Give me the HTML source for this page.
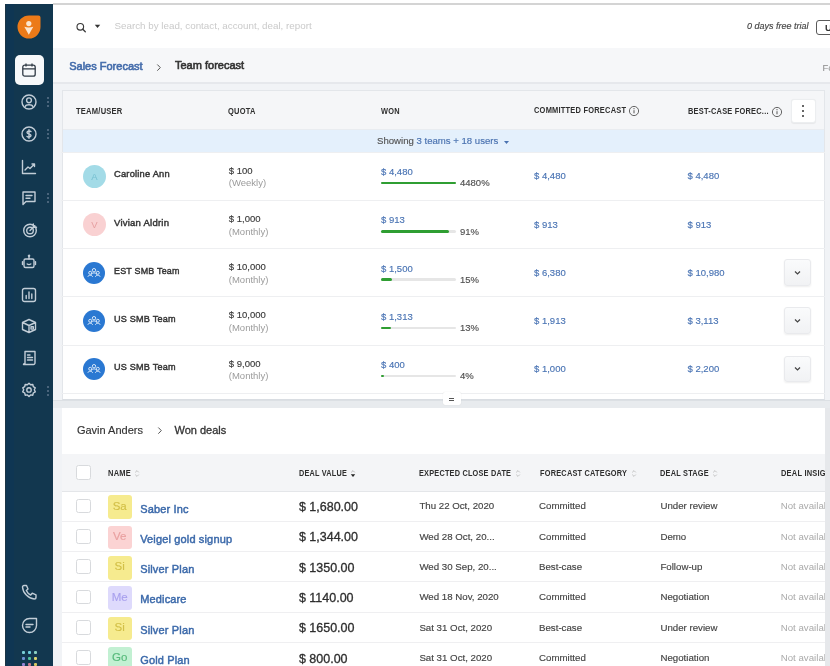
<!DOCTYPE html><html><head><meta charset="utf-8"><style>
*{margin:0;padding:0;box-sizing:border-box}
html,body{width:830px;height:666px;overflow:hidden;background:#fff;font-family:"Liberation Sans",sans-serif;color:#333}
div,span,svg{position:absolute}
.t{white-space:nowrap;line-height:1}
.m{-webkit-text-stroke:0.45px currentColor}
.m3{-webkit-text-stroke:0.6px currentColor}
.m1{-webkit-text-stroke:0.15px currentColor}
.m2{-webkit-text-stroke:0.3px currentColor}
.hb{font-weight:bold}
</style></head><body><div id="wrap" style="left:0;top:0;width:830px;height:666px;overflow:hidden;filter:blur(0.35px)">
<div style="left:0.00px;top:0.00px;width:830.00px;height:666.00px;background:#fff;"></div>
<div style="left:53.00px;top:3.00px;width:777.00px;height:1.50px;background:#d4d4d4;"></div>
<div style="left:5.00px;top:4.00px;width:48.00px;height:662.00px;background:#12374f;"></div>
<div style="left:6.00px;top:4.00px;width:7.50px;height:662.00px;background:#0f3653;"></div>
<div style="left:4.50px;top:4.00px;width:1.80px;height:662.00px;background:#1b3545;"></div>
<div style="left:53.00px;top:4.50px;width:777.00px;height:43.50px;background:#fff;"></div>
<div style="left:53.00px;top:48.00px;width:777.00px;height:34.00px;background:#f6f7f9;"></div>
<div style="left:53.00px;top:82.00px;width:777.00px;height:2.00px;background:#e6e8ec;"></div>
<div style="left:53.00px;top:84.00px;width:777.00px;height:582.00px;background:#f1f3f6;"></div>
<div style="left:61.50px;top:90.00px;width:763.00px;height:309.50px;background:#fff;border:1px solid #e3e6ea;border-bottom:1px solid #d9dde2"></div>
<div style="left:62.50px;top:91.00px;width:761.00px;height:38.00px;background:#f5f6f8;"></div>
<div style="left:62.50px;top:129.00px;width:761.00px;height:1.00px;background:#e9ecf0;"></div>
<div style="left:62.50px;top:130.00px;width:761.00px;height:22.00px;background:#e4f0fc;"></div>
<div style="left:53.00px;top:399.50px;width:777.00px;height:8.50px;background:#e8ebee;border-top:1px solid #dce0e4"></div>
<div style="left:62.00px;top:408.00px;width:763.00px;height:258.00px;background:#fff;"></div>
<div style="left:825.00px;top:408.00px;width:5.00px;height:258.00px;background:#e6e8eb;"></div>
<svg style="left:75px;top:21px" width="13" height="13" viewBox="0 0 13 13"><circle cx="5.3" cy="5.8" r="3.3" stroke="#3a3a3a" stroke-width="1.15" fill="none"/><path d="M7.8 8.3 L10.3 10.8" stroke="#3a3a3a" stroke-width="1.3" stroke-linecap="round"/></svg>
<svg style="left:94px;top:24px" width="7" height="5" viewBox="0 0 7 5"><path d="M0.8 0.8 L6.2 0.8 L3.5 4 Z" fill="#333"/></svg>
<div class="t" style="left:114.50px;top:21.35px;font-size:9.80px;color:#cacaca;">Search by lead, contact, account, deal, report</div>
<div class="t m1" style="left:747.00px;top:22.24px;font-size:9.00px;color:#444;font-style:italic">0 days free trial</div>
<div style="left:816.00px;top:20.00px;width:20.00px;height:15.00px;background:#fff;border:1.4px solid #5a5a5a;border-radius:3px"></div>
<div class="t hb" style="left:825.00px;top:22.88px;font-size:9.50px;color:#333;">U</div>
<div class="t m3" style="left:69.20px;top:60.51px;font-size:11.00px;color:#446cab;">Sales Forecast</div>
<svg style="left:155px;top:63px" width="8" height="9" viewBox="0 0 8 9"><path d="M2.3 1.5 L5.3 4.6 L2.3 7.7" stroke="#555" stroke-width="1" fill="none"/></svg>
<div class="t m3" style="left:175.00px;top:59.71px;font-size:11.00px;color:#333;">Team forecast</div>
<div class="t" style="left:822.50px;top:62.88px;font-size:9.50px;color:#8a8a8a;">Fo</div>
<svg style="left:15.5px;top:14px" width="26" height="26" viewBox="0 0 26 26"><path d="M13 1.5 H22.5 Q24.5 1.5 24.5 3.5 V13 A11.5 11.5 0 1 1 13 1.5 Z" fill="#ec7a18"/><circle cx="12.8" cy="9.6" r="2.6" fill="#fbe6d0"/><path d="M8.3 12.8 Q12.8 14.2 17.3 12.8 L12.8 20.8 Z" fill="#fbe6d0"/></svg>
<div style="left:14.80px;top:55.00px;width:29.40px;height:29.80px;background:#f6f8fa;border-radius:5px"></div>
<svg style="left:21px;top:62px" width="16" height="16" viewBox="0 0 16 16"><rect x="1.8" y="3.2" width="12.4" height="11" rx="2" stroke="#2f3a45" stroke-width="1.3" fill="none"/><path d="M1.8 6.8 H14.2 M5 1.5 V4.5 M11 1.5 V4.5" stroke="#2f3a45" stroke-width="1.3"/></svg>
<svg style="left:21.0px;top:93.5px" width="16" height="16" viewBox="0 0 16 16"><g stroke="#c2cdd7" fill="none" stroke-width="1.4" stroke-linecap="round" stroke-linejoin="round"><circle cx="8" cy="8" r="7"/><circle cx="8" cy="6.3" r="2.4"/><path d="M4.2 12.6 C5 10.2 11 10.2 11.8 12.6"/></g></svg>
<div style="left:47.20px;top:97.00px;width:1.60px;height:1.60px;background:#5d748a;border-radius:1px"></div>
<div style="left:47.20px;top:101.00px;width:1.60px;height:1.60px;background:#5d748a;border-radius:1px"></div>
<div style="left:47.20px;top:105.00px;width:1.60px;height:1.60px;background:#5d748a;border-radius:1px"></div>
<svg style="left:21.0px;top:126.0px" width="16" height="16" viewBox="0 0 16 16"><g stroke="#c2cdd7" fill="none" stroke-width="1.4" stroke-linecap="round" stroke-linejoin="round"><circle cx="8" cy="8" r="7"/><path d="M10 5.6 C9.4 4.8 6 4.6 6 6.6 C6 8.4 10 7.6 10 9.5 C10 11.4 6.6 11.2 6 10.4 M8 3.8 V12.2"/></g></svg>
<div style="left:47.20px;top:129.00px;width:1.60px;height:1.60px;background:#5d748a;border-radius:1px"></div>
<div style="left:47.20px;top:133.00px;width:1.60px;height:1.60px;background:#5d748a;border-radius:1px"></div>
<div style="left:47.20px;top:137.00px;width:1.60px;height:1.60px;background:#5d748a;border-radius:1px"></div>
<svg style="left:21.0px;top:158.5px" width="16" height="16" viewBox="0 0 16 16"><g stroke="#c2cdd7" fill="none" stroke-width="1.4" stroke-linecap="round" stroke-linejoin="round"><path d="M1.5 1.5 V14.5 H14.5"/><path d="M4 11 L7 8 L9 9.5 L13.5 5 M11 5 H13.5 V7.5"/></g></svg>
<svg style="left:21.0px;top:190.0px" width="16" height="16" viewBox="0 0 16 16"><g stroke="#c2cdd7" fill="none" stroke-width="1.4" stroke-linecap="round" stroke-linejoin="round"><path d="M2 2 H14 V11.5 H5 L2 14.5 Z"/><path d="M5 5.5 H11 M5 8.3 H9"/></g></svg>
<div style="left:47.20px;top:193.00px;width:1.60px;height:1.60px;background:#5d748a;border-radius:1px"></div>
<div style="left:47.20px;top:197.00px;width:1.60px;height:1.60px;background:#5d748a;border-radius:1px"></div>
<div style="left:47.20px;top:201.00px;width:1.60px;height:1.60px;background:#5d748a;border-radius:1px"></div>
<svg style="left:21.5px;top:222.0px" width="16" height="16" viewBox="0 0 16 16"><g stroke="#c2cdd7" fill="none" stroke-width="1.4" stroke-linecap="round" stroke-linejoin="round"><circle cx="8" cy="8.5" r="6.3"/><circle cx="8" cy="8.5" r="3.3"/><path d="M8 8.5 L12.8 3.7 M11.3 2 V5.2 H14.5"/></g></svg>
<svg style="left:21.0px;top:254.0px" width="16" height="16" viewBox="0 0 16 16"><g stroke="#c2cdd7" fill="none" stroke-width="1.4" stroke-linecap="round" stroke-linejoin="round"><rect x="3" y="5" width="10" height="8.5" rx="1.5"/><path d="M8 2.6 V5 M6.2 10 Q8 11.2 9.8 10 M1.5 7.8 V10.6 M14.5 7.8 V10.6"/><circle cx="8" cy="1.8" r="0.6"/></g></svg>
<svg style="left:21.0px;top:286.5px" width="16" height="16" viewBox="0 0 16 16"><g stroke="#c2cdd7" fill="none" stroke-width="1.4" stroke-linecap="round" stroke-linejoin="round"><rect x="1.5" y="1.5" width="13" height="13" rx="2"/><path d="M5.2 11.5 V8.5 M8 11.5 V5 M10.8 11.5 V7"/></g></svg>
<svg style="left:21.0px;top:318.0px" width="16" height="16" viewBox="0 0 16 16"><g stroke="#c2cdd7" fill="none" stroke-width="1.4" stroke-linecap="round" stroke-linejoin="round"><path d="M8 1.5 L14.5 4.5 V11.5 L8 14.5 L1.5 11.5 V4.5 Z M1.5 4.5 L8 7.5 L14.5 4.5 M8 7.5 V14.5"/><rect x="10" y="8.8" width="2.3" height="2.3"/></g></svg>
<svg style="left:21.0px;top:350.0px" width="16" height="16" viewBox="0 0 16 16"><g stroke="#c2cdd7" fill="none" stroke-width="1.4" stroke-linecap="round" stroke-linejoin="round"><path d="M4 13.5 V1.5 H14 V13 A1.5 1.5 0 0 1 12.5 14.5 H2.5 A1.5 1.5 0 0 1 4 13.5"/><path d="M6.5 5 H9 M6.5 7.5 H11.5 M6.5 10 H11.5"/></g></svg>
<svg style="left:21.0px;top:382.0px" width="16" height="16" viewBox="0 0 16 16"><g stroke="#c2cdd7" fill="none" stroke-width="1.4" stroke-linecap="round" stroke-linejoin="round"><path d="M8 1.2 L9.6 2.8 L11.8 2.5 L12.3 4.7 L14.3 5.8 L13.3 7.8 L14.3 9.9 L12.3 11 L11.8 13.2 L9.6 12.9 L8 14.5 L6.4 12.9 L4.2 13.2 L3.7 11 L1.7 9.9 L2.7 7.8 L1.7 5.8 L3.7 4.7 L4.2 2.5 L6.4 2.8 Z"/><circle cx="8" cy="7.9" r="2.2"/></g></svg>
<div style="left:47.20px;top:386.00px;width:1.60px;height:1.60px;background:#5d748a;border-radius:1px"></div>
<div style="left:47.20px;top:390.00px;width:1.60px;height:1.60px;background:#5d748a;border-radius:1px"></div>
<div style="left:47.20px;top:394.00px;width:1.60px;height:1.60px;background:#5d748a;border-radius:1px"></div>
<svg style="left:20.5px;top:583.5px" width="17" height="17" viewBox="0 0 17 17"><g stroke="#c2cdd7" fill="none" stroke-width="1.4" stroke-linecap="round" stroke-linejoin="round"><path d="M3 1.5 L5.5 1.5 L7 5 L5.3 6.5 C6.2 8.6 7.6 10 9.7 11 L11.2 9.2 L15 10.8 V13.2 C15 14.2 14.2 15 13.2 15 C7.5 14.6 1.8 9 1.5 3 C1.5 2.2 2.2 1.5 3 1.5 Z"/></g></svg>
<svg style="left:21.0px;top:617.0px" width="17" height="17" viewBox="0 0 17 17"><g stroke="#c2cdd7" fill="none" stroke-width="1.4" stroke-linecap="round" stroke-linejoin="round"><path d="M8.5 1.5 H15.5 V8.5 A7 7 0 1 1 8.5 1.5 Z"/><path d="M5 7.5 H12 M5 10 H9"/></g></svg>
<div style="left:21.50px;top:650.50px;width:3.50px;height:3.50px;background:#79cfd6;border-radius:1px"></div>
<div style="left:27.50px;top:650.50px;width:3.50px;height:3.50px;background:#6fcfe0;border-radius:1px"></div>
<div style="left:33.50px;top:650.50px;width:3.50px;height:3.50px;background:#8acfc2;border-radius:1px"></div>
<div style="left:21.50px;top:656.50px;width:3.50px;height:3.50px;background:#6d92d3;border-radius:1px"></div>
<div style="left:27.50px;top:656.50px;width:3.50px;height:3.50px;background:#4fbf9c;border-radius:1px"></div>
<div style="left:33.50px;top:656.50px;width:3.50px;height:3.50px;background:#d9d36e;border-radius:1px"></div>
<div style="left:21.50px;top:662.50px;width:3.50px;height:3.50px;background:#9683d3;border-radius:1px"></div>
<div style="left:27.50px;top:662.50px;width:3.50px;height:3.50px;background:#c7788c;border-radius:1px"></div>
<div style="left:33.50px;top:662.50px;width:3.50px;height:3.50px;background:#d7c862;border-radius:1px"></div>
<div class="t hb" style="left:76.00px;top:106.80px;font-size:8.50px;letter-spacing:0.25px;color:#2f2f2f;transform:scaleX(0.8894);transform-origin:0 0">TEAM/USER</div>
<div class="t hb" style="left:228.40px;top:107.00px;font-size:8.50px;letter-spacing:0.25px;color:#2f2f2f;transform:scaleX(0.8789);transform-origin:0 0">QUOTA</div>
<div class="t hb" style="left:381.00px;top:107.00px;font-size:8.50px;letter-spacing:0.25px;color:#2f2f2f;transform:scaleX(0.8697);transform-origin:0 0">WON</div>
<div class="t hb" style="left:534.00px;top:106.30px;font-size:8.50px;letter-spacing:0.25px;color:#2f2f2f;transform:scaleX(0.8776);transform-origin:0 0">COMMITTED FORECAST</div>
<svg style="left:628.2px;top:104.7px" width="12" height="12" viewBox="0 0 12 12"><circle cx="6" cy="6" r="4.6" stroke="#555" stroke-width="0.9" fill="none"/><path d="M6 5.2 V8.3" stroke="#555" stroke-width="1"/><circle cx="6" cy="3.7" r="0.6" fill="#555"/></svg>
<div class="t hb" style="left:687.50px;top:107.00px;font-size:8.50px;letter-spacing:0.25px;color:#2f2f2f;transform:scaleX(0.8741);transform-origin:0 0">BEST-CASE FOREC...</div>
<svg style="left:770.8px;top:106.0px" width="12" height="12" viewBox="0 0 12 12"><circle cx="6" cy="6" r="4.6" stroke="#555" stroke-width="0.9" fill="none"/><path d="M6 5.2 V8.3" stroke="#555" stroke-width="1"/><circle cx="6" cy="3.7" r="0.6" fill="#555"/></svg>
<div style="left:791.00px;top:99.00px;width:24.50px;height:23.50px;background:#fff;border:1px solid #eceef0;border-radius:3px;box-shadow:0 0.5px 1px rgba(0,0,0,.06)"></div>
<div style="left:802.00px;top:105.00px;width:2.20px;height:2.20px;background:#333;border-radius:50%"></div>
<div style="left:802.00px;top:109.80px;width:2.20px;height:2.20px;background:#333;border-radius:50%"></div>
<div style="left:802.00px;top:114.60px;width:2.20px;height:2.20px;background:#333;border-radius:50%"></div>
<div class="t m1" style="left:377px;top:135.67px;font-size:9.6px;color:#555">Showing <span style="position:static;color:#4a72b0">3 teams + 18 users</span></div>
<svg style="left:503px;top:139.5px" width="7" height="5" viewBox="0 0 7 5"><path d="M1 1 L6 1 L3.5 4 Z" fill="#4a72b0"/></svg>
<div style="left:61.00px;top:151.50px;width:764.00px;height:1.00px;background:#eeeff1;"></div>
<div style="left:83.00px;top:164.50px;width:23.00px;height:23.00px;background:#a3dbe7;border-radius:50%"></div>
<div class="t" style="left:83px;top:171.7px;width:23px;text-align:center;font-size:9.5px;color:#74bfd0">A</div>
<div class="t m" style="left:113.80px;top:169.48px;font-size:9.50px;color:#363636;letter-spacing:0.22px;transform:scaleX(0.9803);transform-origin:0 0;">Caroline Ann</div>
<div class="t m1" style="left:228.80px;top:165.58px;font-size:9.50px;color:#3a3a3a;">$ 100</div>
<div class="t" style="left:228.80px;top:178.38px;font-size:9.50px;color:#9b9b9b;">(Weekly)</div>
<div class="t m1" style="left:381.00px;top:167.18px;font-size:9.50px;color:#4a74b4;">$ 4,480</div>
<div style="left:381.00px;top:181.80px;width:75.00px;height:2.60px;background:#e6e6e6;border-radius:2px"></div>
<div style="left:381.00px;top:181.80px;width:75.00px;height:2.60px;background:#2f9e32;border-radius:2px"></div>
<div class="t m1" style="left:460.00px;top:178.48px;font-size:9.50px;color:#505050;">4480%</div>
<div class="t m1" style="left:534.00px;top:171.38px;font-size:9.50px;color:#4a74b4;">$ 4,480</div>
<div class="t m1" style="left:687.50px;top:171.38px;font-size:9.50px;color:#4a74b4;">$ 4,480</div>
<div style="left:61.00px;top:199.80px;width:764.00px;height:1.00px;background:#eeeff1;"></div>
<div style="left:83.00px;top:212.80px;width:23.00px;height:23.00px;background:#f9d1d2;border-radius:50%"></div>
<div class="t" style="left:83px;top:220.0px;width:23px;text-align:center;font-size:9.5px;color:#e6a0a2">V</div>
<div class="t m" style="left:113.80px;top:217.78px;font-size:9.50px;color:#363636;letter-spacing:0.22px;transform:scaleX(1.0046);transform-origin:0 0;">Vivian Aldrin</div>
<div class="t m1" style="left:228.80px;top:213.88px;font-size:9.50px;color:#3a3a3a;">$ 1,000</div>
<div class="t" style="left:228.80px;top:226.68px;font-size:9.50px;color:#9b9b9b;">(Monthly)</div>
<div class="t m1" style="left:381.00px;top:215.48px;font-size:9.50px;color:#4a74b4;">$ 913</div>
<div style="left:381.00px;top:230.10px;width:75.00px;height:2.60px;background:#e6e6e6;border-radius:2px"></div>
<div style="left:381.00px;top:230.10px;width:68.25px;height:2.60px;background:#2f9e32;border-radius:2px"></div>
<div class="t m1" style="left:460.00px;top:226.78px;font-size:9.50px;color:#505050;">91%</div>
<div class="t m1" style="left:534.00px;top:219.68px;font-size:9.50px;color:#4a74b4;">$ 913</div>
<div class="t m1" style="left:687.50px;top:219.68px;font-size:9.50px;color:#4a74b4;">$ 913</div>
<div style="left:61.00px;top:248.00px;width:764.00px;height:1.00px;background:#eeeff1;"></div>
<div style="left:83.30px;top:261.50px;width:22.00px;height:22.00px;background:#2a78d2;border-radius:50%"></div>
<svg style="left:86.2px;top:265.5px" width="16" height="14" viewBox="0 0 16 14"><g stroke="#e8f1fb" stroke-width="0.9" fill="none"><circle cx="8" cy="4.2" r="1.7"/><path d="M5.4 8.6 C5.7 6.4 10.3 6.4 10.6 8.6"/><circle cx="4.2" cy="6.8" r="1.5"/><path d="M1.8 10.8 C2.1 8.8 6.3 8.8 6.6 10.8"/><circle cx="11.8" cy="6.8" r="1.5"/><path d="M9.4 10.8 C9.7 8.8 13.9 8.8 14.2 10.8"/></g></svg>
<div class="t m" style="left:113.80px;top:265.98px;font-size:9.50px;color:#363636;letter-spacing:0.22px;transform:scaleX(0.9390);transform-origin:0 0;">EST SMB Team</div>
<div class="t m1" style="left:228.80px;top:262.08px;font-size:9.50px;color:#3a3a3a;">$ 10,000</div>
<div class="t" style="left:228.80px;top:274.88px;font-size:9.50px;color:#9b9b9b;">(Monthly)</div>
<div class="t m1" style="left:381.00px;top:263.68px;font-size:9.50px;color:#4a74b4;">$ 1,500</div>
<div style="left:381.00px;top:278.30px;width:75.00px;height:2.60px;background:#e6e6e6;border-radius:2px"></div>
<div style="left:381.00px;top:278.30px;width:11.25px;height:2.60px;background:#2f9e32;border-radius:2px"></div>
<div class="t m1" style="left:460.00px;top:274.98px;font-size:9.50px;color:#505050;">15%</div>
<div class="t m1" style="left:534.00px;top:267.88px;font-size:9.50px;color:#4a74b4;">$ 6,380</div>
<div class="t m1" style="left:687.50px;top:267.88px;font-size:9.50px;color:#4a74b4;">$ 10,980</div>
<div style="left:784.30px;top:259.00px;width:26.30px;height:26.50px;background:linear-gradient(#fafbfc,#f1f2f4);border:1px solid #e9eaed;border-radius:3px;box-shadow:0 1px 2px rgba(0,0,0,.07)"></div>
<svg style="left:793px;top:269.7px" width="9" height="6" viewBox="0 0 9 6"><path d="M2 1.5 L4.5 4 L7 1.5" stroke="#444" stroke-width="1.2" fill="none"/></svg>
<div style="left:61.00px;top:296.20px;width:764.00px;height:1.00px;background:#eeeff1;"></div>
<div style="left:83.30px;top:309.70px;width:22.00px;height:22.00px;background:#2a78d2;border-radius:50%"></div>
<svg style="left:86.2px;top:313.7px" width="16" height="14" viewBox="0 0 16 14"><g stroke="#e8f1fb" stroke-width="0.9" fill="none"><circle cx="8" cy="4.2" r="1.7"/><path d="M5.4 8.6 C5.7 6.4 10.3 6.4 10.6 8.6"/><circle cx="4.2" cy="6.8" r="1.5"/><path d="M1.8 10.8 C2.1 8.8 6.3 8.8 6.6 10.8"/><circle cx="11.8" cy="6.8" r="1.5"/><path d="M9.4 10.8 C9.7 8.8 13.9 8.8 14.2 10.8"/></g></svg>
<div class="t m" style="left:113.80px;top:314.18px;font-size:9.50px;color:#363636;letter-spacing:0.22px;transform:scaleX(0.9561);transform-origin:0 0;">US SMB Team</div>
<div class="t m1" style="left:228.80px;top:310.28px;font-size:9.50px;color:#3a3a3a;">$ 10,000</div>
<div class="t" style="left:228.80px;top:323.08px;font-size:9.50px;color:#9b9b9b;">(Monthly)</div>
<div class="t m1" style="left:381.00px;top:311.88px;font-size:9.50px;color:#4a74b4;">$ 1,313</div>
<div style="left:381.00px;top:326.50px;width:75.00px;height:2.60px;background:#e6e6e6;border-radius:2px"></div>
<div style="left:381.00px;top:326.50px;width:9.75px;height:2.60px;background:#2f9e32;border-radius:2px"></div>
<div class="t m1" style="left:460.00px;top:323.18px;font-size:9.50px;color:#505050;">13%</div>
<div class="t m1" style="left:534.00px;top:316.08px;font-size:9.50px;color:#4a74b4;">$ 1,913</div>
<div class="t m1" style="left:687.50px;top:316.08px;font-size:9.50px;color:#4a74b4;">$ 3,113</div>
<div style="left:784.30px;top:307.20px;width:26.30px;height:26.50px;background:linear-gradient(#fafbfc,#f1f2f4);border:1px solid #e9eaed;border-radius:3px;box-shadow:0 1px 2px rgba(0,0,0,.07)"></div>
<svg style="left:793px;top:317.9px" width="9" height="6" viewBox="0 0 9 6"><path d="M2 1.5 L4.5 4 L7 1.5" stroke="#444" stroke-width="1.2" fill="none"/></svg>
<div style="left:61.00px;top:344.50px;width:764.00px;height:1.00px;background:#eeeff1;"></div>
<div style="left:83.30px;top:358.00px;width:22.00px;height:22.00px;background:#2a78d2;border-radius:50%"></div>
<svg style="left:86.2px;top:362.0px" width="16" height="14" viewBox="0 0 16 14"><g stroke="#e8f1fb" stroke-width="0.9" fill="none"><circle cx="8" cy="4.2" r="1.7"/><path d="M5.4 8.6 C5.7 6.4 10.3 6.4 10.6 8.6"/><circle cx="4.2" cy="6.8" r="1.5"/><path d="M1.8 10.8 C2.1 8.8 6.3 8.8 6.6 10.8"/><circle cx="11.8" cy="6.8" r="1.5"/><path d="M9.4 10.8 C9.7 8.8 13.9 8.8 14.2 10.8"/></g></svg>
<div class="t m" style="left:113.80px;top:362.48px;font-size:9.50px;color:#363636;letter-spacing:0.22px;transform:scaleX(0.9561);transform-origin:0 0;">US SMB Team</div>
<div class="t m1" style="left:228.80px;top:358.58px;font-size:9.50px;color:#3a3a3a;">$ 9,000</div>
<div class="t" style="left:228.80px;top:371.38px;font-size:9.50px;color:#9b9b9b;">(Monthly)</div>
<div class="t m1" style="left:381.00px;top:360.18px;font-size:9.50px;color:#4a74b4;">$ 400</div>
<div style="left:381.00px;top:374.80px;width:75.00px;height:2.60px;background:#e6e6e6;border-radius:2px"></div>
<div style="left:381.00px;top:374.80px;width:3.00px;height:2.60px;background:#2f9e32;border-radius:2px"></div>
<div class="t m1" style="left:460.00px;top:371.48px;font-size:9.50px;color:#505050;">4%</div>
<div class="t m1" style="left:534.00px;top:364.38px;font-size:9.50px;color:#4a74b4;">$ 1,000</div>
<div class="t m1" style="left:687.50px;top:364.38px;font-size:9.50px;color:#4a74b4;">$ 2,200</div>
<div style="left:784.30px;top:355.50px;width:26.30px;height:26.50px;background:linear-gradient(#fafbfc,#f1f2f4);border:1px solid #e9eaed;border-radius:3px;box-shadow:0 1px 2px rgba(0,0,0,.07)"></div>
<svg style="left:793px;top:366.2px" width="9" height="6" viewBox="0 0 9 6"><path d="M2 1.5 L4.5 4 L7 1.5" stroke="#444" stroke-width="1.2" fill="none"/></svg>
<div style="left:61.00px;top:393.00px;width:764.00px;height:1.00px;background:#eeeff1;"></div>
<div style="left:442.70px;top:392.00px;width:18.60px;height:13.30px;background:#fff;border-radius:2px;box-shadow:0 0 1px rgba(0,0,0,.15)"></div>
<div style="left:449.30px;top:397.60px;width:4.80px;height:1.00px;background:#555;"></div>
<div style="left:449.30px;top:399.80px;width:4.80px;height:1.00px;background:#555;"></div>
<div class="t m1" style="left:76.90px;top:424.71px;font-size:11.00px;color:#333;">Gavin Anders</div>
<svg style="left:155.5px;top:426px" width="8" height="9" viewBox="0 0 8 9"><path d="M2.3 1.5 L5.3 4.6 L2.3 7.7" stroke="#555" stroke-width="1" fill="none"/></svg>
<div class="t m2" style="left:174.50px;top:424.71px;font-size:11.00px;color:#333;">Won deals</div>
<div style="left:62.00px;top:453.50px;width:763.00px;height:37.50px;background:#f4f5f7;"></div>
<div style="left:62.00px;top:490.50px;width:763.00px;height:1.00px;background:#e4e6e9;"></div>
<div style="left:76.00px;top:465.00px;width:14.50px;height:14.50px;background:#fff;border:1px solid #d8dadd;border-radius:2.5px"></div>
<div class="t hb" style="left:107.70px;top:468.60px;font-size:8.50px;letter-spacing:0.25px;color:#2f2f2f;transform:scaleX(0.8806);transform-origin:0 0">NAME</div>
<svg style="left:133.5px;top:468.5px" width="6" height="9" viewBox="0 0 6 9"><path d="M1.2 3.4 L3 1.6 L4.8 3.4 M1.2 5.6 L3 7.4 L4.8 5.6" stroke="#b5b5b5" stroke-width="0.8" fill="none"/></svg>
<div class="t hb" style="left:298.50px;top:468.60px;font-size:8.50px;letter-spacing:0.25px;color:#2f2f2f;transform:scaleX(0.8570);transform-origin:0 0">DEAL VALUE</div>
<svg style="left:349.5px;top:468.5px" width="6" height="9" viewBox="0 0 6 9"><path d="M1.2 3.4 L3 1.6 L4.8 3.4" stroke="#aaa" stroke-width="0.8" fill="none"/><path d="M0.8 5.3 L5.2 5.3 L3 8 Z" fill="#222"/></svg>
<div class="t hb" style="left:419.20px;top:468.60px;font-size:8.50px;letter-spacing:0.25px;color:#2f2f2f;transform:scaleX(0.8612);transform-origin:0 0">EXPECTED CLOSE DATE</div>
<svg style="left:514.5px;top:468.5px" width="6" height="9" viewBox="0 0 6 9"><path d="M1.2 3.4 L3 1.6 L4.8 3.4 M1.2 5.6 L3 7.4 L4.8 5.6" stroke="#b5b5b5" stroke-width="0.8" fill="none"/></svg>
<div class="t hb" style="left:539.90px;top:468.60px;font-size:8.50px;letter-spacing:0.25px;color:#2f2f2f;transform:scaleX(0.8671);transform-origin:0 0">FORECAST CATEGORY</div>
<svg style="left:630.5px;top:468.5px" width="6" height="9" viewBox="0 0 6 9"><path d="M1.2 3.4 L3 1.6 L4.8 3.4 M1.2 5.6 L3 7.4 L4.8 5.6" stroke="#b5b5b5" stroke-width="0.8" fill="none"/></svg>
<div class="t hb" style="left:660.00px;top:468.60px;font-size:8.50px;letter-spacing:0.25px;color:#2f2f2f;transform:scaleX(0.8658);transform-origin:0 0">DEAL STAGE</div>
<svg style="left:712.0px;top:468.5px" width="6" height="9" viewBox="0 0 6 9"><path d="M1.2 3.4 L3 1.6 L4.8 3.4 M1.2 5.6 L3 7.4 L4.8 5.6" stroke="#b5b5b5" stroke-width="0.8" fill="none"/></svg>
<div class="t hb" style="left:780.60px;top:468.60px;font-size:8.50px;letter-spacing:0.25px;color:#2f2f2f;transform:scaleX(0.8790);transform-origin:0 0">DEAL INSIG</div>
<div style="left:76.00px;top:498.80px;width:14.50px;height:14.50px;background:#fff;border:1px solid #d8dadd;border-radius:2.5px"></div>
<div style="left:107.60px;top:495.30px;width:24.20px;height:23.70px;background:#f6eb8f;border-radius:3px"></div>
<div class="t m1" style="left:107.6px;top:500.8px;width:24.2px;text-align:center;font-size:11.5px;color:#d3c048">Sa</div>
<div class="t m" style="left:140.20px;top:503.51px;font-size:11.00px;color:#3b69aa;letter-spacing:0.15px">Saber Inc</div>
<div class="t m2" style="left:298.90px;top:501.03px;font-size:12.50px;color:#2e2e2e;">$ 1,680.00</div>
<div class="t m1" style="left:419.40px;top:501.36px;font-size:9.70px;color:#444;">Thu 22 Oct, 2020</div>
<div class="t m1" style="left:539.00px;top:501.36px;font-size:9.70px;color:#444;">Committed</div>
<div class="t m1" style="left:660.40px;top:501.36px;font-size:9.70px;color:#444;">Under review</div>
<div class="t" style="left:780.70px;top:501.36px;font-size:9.70px;color:#aaa;">Not available</div>
<div style="left:62.00px;top:520.80px;width:763.00px;height:1.00px;background:#efeff1;"></div>
<div style="left:76.00px;top:529.10px;width:14.50px;height:14.50px;background:#fff;border:1px solid #d8dadd;border-radius:2.5px"></div>
<div style="left:107.60px;top:525.60px;width:24.20px;height:23.70px;background:#fbd3d3;border-radius:3px"></div>
<div class="t m1" style="left:107.6px;top:531.1px;width:24.2px;text-align:center;font-size:11.5px;color:#e9a0a0">Ve</div>
<div class="t m" style="left:140.20px;top:533.81px;font-size:11.00px;color:#3b69aa;letter-spacing:0.15px">Veigel gold signup</div>
<div class="t m2" style="left:298.90px;top:531.33px;font-size:12.50px;color:#2e2e2e;">$ 1,344.00</div>
<div class="t m1" style="left:419.40px;top:531.66px;font-size:9.70px;color:#444;">Wed 28 Oct, 20...</div>
<div class="t m1" style="left:539.00px;top:531.66px;font-size:9.70px;color:#444;">Committed</div>
<div class="t m1" style="left:660.40px;top:531.66px;font-size:9.70px;color:#444;">Demo</div>
<div class="t" style="left:780.70px;top:531.66px;font-size:9.70px;color:#aaa;">Not available</div>
<div style="left:62.00px;top:551.10px;width:763.00px;height:1.00px;background:#efeff1;"></div>
<div style="left:76.00px;top:559.40px;width:14.50px;height:14.50px;background:#fff;border:1px solid #d8dadd;border-radius:2.5px"></div>
<div style="left:107.60px;top:555.90px;width:24.20px;height:23.70px;background:#f6eb8f;border-radius:3px"></div>
<div class="t m1" style="left:107.6px;top:561.4px;width:24.2px;text-align:center;font-size:11.5px;color:#d3c048">Si</div>
<div class="t m" style="left:140.20px;top:564.11px;font-size:11.00px;color:#3b69aa;letter-spacing:0.15px">Silver Plan</div>
<div class="t m2" style="left:298.90px;top:561.63px;font-size:12.50px;color:#2e2e2e;">$ 1350.00</div>
<div class="t m1" style="left:419.40px;top:561.96px;font-size:9.70px;color:#444;">Wed 30 Sep, 20...</div>
<div class="t m1" style="left:539.00px;top:561.96px;font-size:9.70px;color:#444;">Best-case</div>
<div class="t m1" style="left:660.40px;top:561.96px;font-size:9.70px;color:#444;">Follow-up</div>
<div class="t" style="left:780.70px;top:561.96px;font-size:9.70px;color:#aaa;">Not available</div>
<div style="left:62.00px;top:581.40px;width:763.00px;height:1.00px;background:#efeff1;"></div>
<div style="left:76.00px;top:589.70px;width:14.50px;height:14.50px;background:#fff;border:1px solid #d8dadd;border-radius:2.5px"></div>
<div style="left:107.60px;top:586.20px;width:24.20px;height:23.70px;background:#dedafc;border-radius:3px"></div>
<div class="t m1" style="left:107.6px;top:591.7px;width:24.2px;text-align:center;font-size:11.5px;color:#a9a1ee">Me</div>
<div class="t m" style="left:140.20px;top:594.41px;font-size:11.00px;color:#3b69aa;letter-spacing:0.15px">Medicare</div>
<div class="t m2" style="left:298.90px;top:591.93px;font-size:12.50px;color:#2e2e2e;">$ 1140.00</div>
<div class="t m1" style="left:419.40px;top:592.26px;font-size:9.70px;color:#444;">Wed 18 Nov, 2020</div>
<div class="t m1" style="left:539.00px;top:592.26px;font-size:9.70px;color:#444;">Committed</div>
<div class="t m1" style="left:660.40px;top:592.26px;font-size:9.70px;color:#444;">Negotiation</div>
<div class="t" style="left:780.70px;top:592.26px;font-size:9.70px;color:#aaa;">Not available</div>
<div style="left:62.00px;top:611.70px;width:763.00px;height:1.00px;background:#efeff1;"></div>
<div style="left:76.00px;top:620.00px;width:14.50px;height:14.50px;background:#fff;border:1px solid #d8dadd;border-radius:2.5px"></div>
<div style="left:107.60px;top:616.50px;width:24.20px;height:23.70px;background:#f6eb8f;border-radius:3px"></div>
<div class="t m1" style="left:107.6px;top:622.0px;width:24.2px;text-align:center;font-size:11.5px;color:#d3c048">Si</div>
<div class="t m" style="left:140.20px;top:624.71px;font-size:11.00px;color:#3b69aa;letter-spacing:0.15px">Silver Plan</div>
<div class="t m2" style="left:298.90px;top:622.23px;font-size:12.50px;color:#2e2e2e;">$ 1650.00</div>
<div class="t m1" style="left:419.40px;top:622.56px;font-size:9.70px;color:#444;">Sat 31 Oct, 2020</div>
<div class="t m1" style="left:539.00px;top:622.56px;font-size:9.70px;color:#444;">Best-case</div>
<div class="t m1" style="left:660.40px;top:622.56px;font-size:9.70px;color:#444;">Under review</div>
<div class="t" style="left:780.70px;top:622.56px;font-size:9.70px;color:#aaa;">Not available</div>
<div style="left:62.00px;top:642.00px;width:763.00px;height:1.00px;background:#efeff1;"></div>
<div style="left:76.00px;top:650.30px;width:14.50px;height:14.50px;background:#fff;border:1px solid #d8dadd;border-radius:2.5px"></div>
<div style="left:107.60px;top:646.80px;width:24.20px;height:23.70px;background:#c2f0d2;border-radius:3px"></div>
<div class="t m1" style="left:107.6px;top:652.3px;width:24.2px;text-align:center;font-size:11.5px;color:#56ba7b">Go</div>
<div class="t m" style="left:140.20px;top:655.01px;font-size:11.00px;color:#3b69aa;letter-spacing:0.15px">Gold Plan</div>
<div class="t m2" style="left:298.90px;top:652.53px;font-size:12.50px;color:#2e2e2e;">$ 800.00</div>
<div class="t m1" style="left:419.40px;top:652.86px;font-size:9.70px;color:#444;">Sat 31 Oct, 2020</div>
<div class="t m1" style="left:539.00px;top:652.86px;font-size:9.70px;color:#444;">Committed</div>
<div class="t m1" style="left:660.40px;top:652.86px;font-size:9.70px;color:#444;">Negotiation</div>
<div class="t" style="left:780.70px;top:652.86px;font-size:9.70px;color:#aaa;">Not available</div>
<div style="left:825.00px;top:408.00px;width:5.00px;height:258.00px;background:#e6e8eb;"></div>
</div></body></html>
